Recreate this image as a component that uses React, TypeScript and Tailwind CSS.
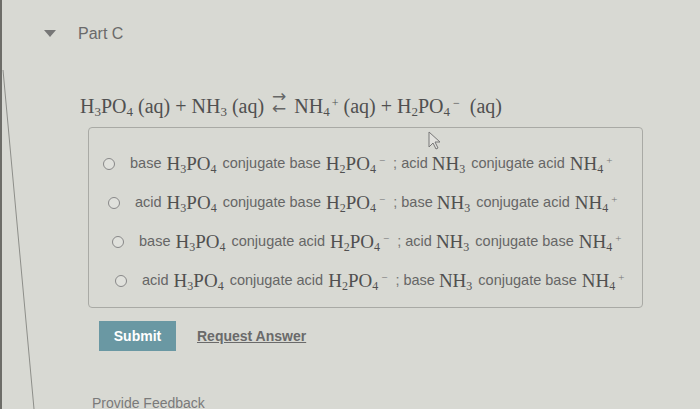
import React from "react";

const serif = "font-['Liberation_Serif','Times_New_Roman',serif]";

function Chem({ parts, charge }: { parts: [string, string?][]; charge?: string }) {
  return (
    <span className={`${serif} text-[19px] text-[#505050]`}>
      {parts.map(([base, sub], i) => (
        <React.Fragment key={i}>
          {base}
          {sub && <sub className="text-[12px]">{sub}</sub>}
        </React.Fragment>
      ))}
      {charge && <sup className="text-[11px] ml-[3px] text-[#777]">{charge}</sup>}
    </span>
  );
}

const H3PO4: [string, string?][] = [["H", "3"], ["PO", "4"]];
const H2PO4: [string, string?][] = [["H", "2"], ["PO", "4"]];
const NH3: [string, string?][] = [["NH", "3"]];
const NH4: [string, string?][] = [["NH", "4"]];

const options = [
  { a: "base", b: "conjugate base", c: "acid", d: "conjugate acid", indent: "ml-[14px]" },
  { a: "acid", b: "conjugate base", c: "base", d: "conjugate acid", indent: "ml-[19px]" },
  { a: "base", b: "conjugate acid", c: "acid", d: "conjugate base", indent: "ml-[23px]" },
  { a: "acid", b: "conjugate acid", c: "base", d: "conjugate base", indent: "ml-[26px]" },
];

export default function App() {
  return (
    <div className="relative w-[700px] h-[409px] overflow-hidden bg-[#d8d9d3] font-['Liberation_Sans',Arial,sans-serif] text-[#666]">
      {/* screen edge */}
      <svg className="absolute left-0 top-0 pointer-events-none" width="40" height="409">
        <line x1="1" y1="0" x2="1" y2="409" stroke="#6d6d68" strokeWidth="2" />
        <line x1="3" y1="70" x2="34" y2="409" stroke="#8d8e89" strokeWidth="1" />
      </svg>

      {/* header */}
      <div className="flex items-center pl-[44px] pt-[22px]">
        <svg width="12" height="8" viewBox="0 0 12 8">
          <path d="M0 0h12L6 7z" fill="#777" />
        </svg>
        <span className="ml-[22px] text-[16px] text-[#6a6a6a]">Part C</span>
      </div>

      {/* equation */}
      <div className={`mt-[45px] ml-[80px] flex items-center text-[20px] text-[#505050] ${serif}`}>
        <span>
          H<sub className="text-[13px]">3</sub>PO<sub className="text-[13px]">4</sub> (aq) + NH<sub className="text-[13px]">3</sub> (aq)
        </span>
        <span className="mx-[8px] flex flex-col items-center leading-[12px] text-[17px] text-[#666] -mt-[8px] font-['DejaVu_Sans',sans-serif]">
          <span>→</span>
          <span>←</span>
        </span>
        <span>
          NH<sub className="text-[13px]">4</sub>
          <sup className="text-[12px] ml-[2px]">+</sup> (aq) + H<sub className="text-[13px]">2</sub>PO<sub className="text-[13px]">4</sub>
          <sup className="text-[12px] ml-[3px]">−</sup>&nbsp;&nbsp;(aq)
        </span>
      </div>

      {/* options box */}
      <div className="relative mt-[6px] ml-[88px] w-[555px] h-[181px] rounded-[4px] border border-[#a9aaa5] pt-[25px]">
        <svg className="absolute left-[339px] top-[3px]" width="14" height="20" viewBox="0 0 14 20">
          <path d="M1 1v15l4-4 3 6 2-1-3-6h5z" fill="#e2e2de" stroke="#777" strokeWidth="1" />
        </svg>
        <div className="flex flex-col gap-[17px]">
          {options.map((o, i) => (
            <div key={i} className={`flex items-center h-[22px] ${o.indent}`}>
              <span className="w-[12px] h-[12px] rounded-full border-[1.5px] border-[#888] bg-[#e0e1dc]" />
              <span className="ml-[15px] text-[14.5px] text-[#666]">{o.a}</span>
              <span className="ml-[5px]"><Chem parts={H3PO4} /></span>
              <span className="ml-[6px] text-[14.5px] text-[#666]">{o.b}</span>
              <span className="ml-[5px]"><Chem parts={H2PO4} charge="−" /></span>
              <span className="ml-[8px] text-[14.5px] text-[#777]">;</span>
              <span className="ml-[4px] text-[14.5px] text-[#666]">{o.c}</span>
              <span className="ml-[4px]"><Chem parts={NH3} /></span>
              <span className="ml-[6px] text-[14.5px] text-[#666]">{o.d}</span>
              <span className="ml-[5px]"><Chem parts={NH4} charge="+" /></span>
            </div>
          ))}
        </div>
      </div>

      {/* actions */}
      <div className="flex items-center mt-[13px] ml-[99px]">
        <button className="w-[77px] h-[30px] bg-[#6a98a3] text-white text-[14px] font-bold">Submit</button>
        <a className="ml-[21px] text-[14px] font-bold text-[#6a6a6a] underline">Request Answer</a>
      </div>

      <div className="mt-[45px] ml-[92px] text-[14px] leading-[14px] text-[#7a7a7a]">Provide Feedback</div>
    </div>
  );
}
